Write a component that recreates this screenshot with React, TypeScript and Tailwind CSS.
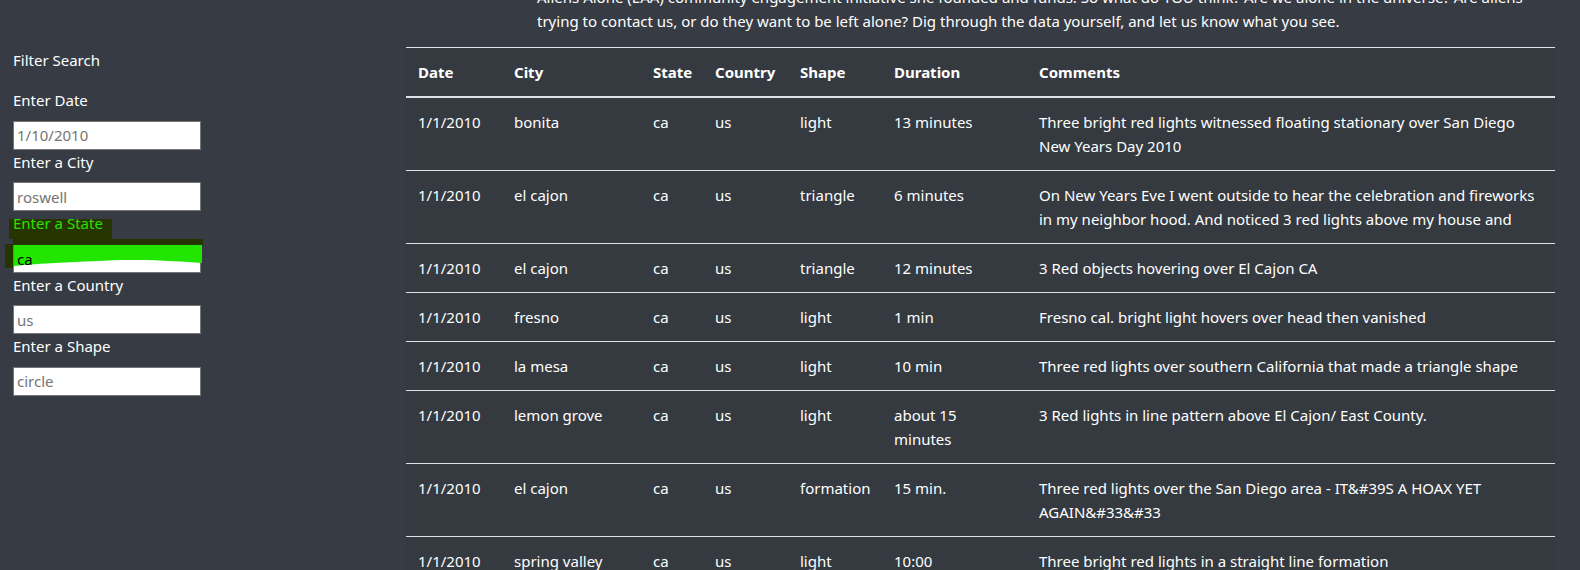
import React from "react";

type Sighting = {
  date: string;
  city: string;
  state: string;
  country: string;
  shape: string;
  duration: string;
  comments: string;
};

const sightings: Sighting[] = [
  { date: "1/1/2010", city: "bonita", state: "ca", country: "us", shape: "light", duration: "13 minutes", comments: "Three bright red lights witnessed floating stationary over San Diego New Years Day 2010" },
  { date: "1/1/2010", city: "el cajon", state: "ca", country: "us", shape: "triangle", duration: "6 minutes", comments: "On New Years Eve I went outside to hear the celebration and fireworks in my neighbor hood. And noticed 3 red lights above my house and" },
  { date: "1/1/2010", city: "el cajon", state: "ca", country: "us", shape: "triangle", duration: "12 minutes", comments: "3 Red objects hovering over El Cajon CA" },
  { date: "1/1/2010", city: "fresno", state: "ca", country: "us", shape: "light", duration: "1 min", comments: "Fresno cal. bright light hovers over head then vanished" },
  { date: "1/1/2010", city: "la mesa", state: "ca", country: "us", shape: "light", duration: "10 min", comments: "Three red lights over southern California that made a triangle shape" },
  { date: "1/1/2010", city: "lemon grove", state: "ca", country: "us", shape: "light", duration: "about 15 minutes", comments: "3 Red lights in line pattern above El Cajon/ East County." },
  { date: "1/1/2010", city: "el cajon", state: "ca", country: "us", shape: "formation", duration: "15 min.", comments: "Three red lights over the San Diego area - IT&#39S A HOAX YET AGAIN&#33&#33" },
  { date: "1/1/2010", city: "spring valley", state: "ca", country: "us", shape: "light", duration: "10:00", comments: "Three bright red lights in a straight line formation" },
];

const font = { fontFamily: '"Noto Sans", "Open Sans", sans-serif' };

function FilterField({ label, placeholder }: { label: string; placeholder: string }) {
  return (
    <div>
      <label className="block h-[24.5px] leading-6 text-[15px] text-white">{label}</label>
      <input
        placeholder={placeholder}
        className="mt-2 block h-[29px] w-[188px] border border-[#767676] bg-white px-[3px] text-[15px] text-black placeholder:text-[#757575] outline-none"
      />
    </div>
  );
}

export default function App() {
  return (
    <div className="h-[570px] w-full overflow-hidden bg-[#373b43] text-white" style={font}>
      <div className="flex w-full">
        {/* Filters */}
        <aside className="w-[406px] shrink-0 pl-[13px] pt-[48px]">
          <h4 className="h-6 text-[15px] leading-6">Filter Search</h4>
          <div className="mt-4">
            <FilterField label="Enter Date" placeholder="1/10/2010" />
            <FilterField label="Enter a City" placeholder="roswell" />

            {/* State field, marked up with a highlighter */}
            <div className="relative">
              <div className="absolute left-[-4px] top-[8px] h-[20px] w-[103px] bg-[#263400]" />
              <label className="relative block h-[24.5px] text-[15px] leading-6 text-[#2ae000]">Enter a State</label>
              <div className="relative mt-2 h-[29px] w-[188px] border border-t-0 border-[#767676] bg-white">
                <svg className="absolute left-0 top-px" width="188" height="22" viewBox="0 0 188 22">
                  <path
                    d="M0 0 H188 V18 C170 17 150 15 120 15 C90 15 70 17 40 18 C20 19 8 20 0 21 Z"
                    fill="#22e600"
                  />
                </svg>
                <div className="absolute left-[-1px] top-[-5px] h-[6px] w-[190px] bg-[#263400]" />
                <input
                  readOnly
                  value="ca"
                  className="relative block h-full w-full bg-transparent px-[3px] pt-[3px] text-[15px] text-black outline-none"
                />
              </div>
              <div className="absolute left-[-8px] top-[33px] h-[24px] w-[8px] bg-[#263400]" />
            </div>

            <FilterField label="Enter a Country" placeholder="us" />
            <FilterField label="Enter a Shape" placeholder="circle" />
          </div>
        </aside>

        {/* Main content */}
        <main className="w-[1149px] shrink-0 overflow-hidden">
          <p className="-mt-[15px] overflow-hidden pl-[131px] text-[15px] leading-6">
            <span className="block whitespace-nowrap">
              Aliens Alone (EAA) community engagement initiative she founded and funds. So what do YOU think? Are we alone in the universe? Are aliens
            </span>
            <span className="block whitespace-nowrap">
              trying to contact us, or do they want to be left alone? Dig through the data yourself, and let us know what you see.
            </span>
          </p>

          <table className="mt-[14px] w-full table-fixed border-collapse bg-[#343a40] text-left text-[15px] leading-6">
            <colgroup>
              <col className="w-[96px]" />
              <col className="w-[139px]" />
              <col className="w-[62px]" />
              <col className="w-[85px]" />
              <col className="w-[94px]" />
              <col className="w-[145px]" />
              <col />
            </colgroup>
            <thead>
              <tr className="border-t border-b-2 border-[#dee2e6]">
                {["Date", "City", "State", "Country", "Shape", "Duration", "Comments"].map((h) => (
                  <th key={h} className="p-3 align-top font-bold">
                    {h}
                  </th>
                ))}
              </tr>
            </thead>
            <tbody>
              {sightings.map((s, i) => (
                <tr key={i} className="border-b border-[#dee2e6]">
                  <td className="p-3 align-top">{s.date}</td>
                  <td className="p-3 align-top">{s.city}</td>
                  <td className="p-3 align-top">{s.state}</td>
                  <td className="p-3 align-top">{s.country}</td>
                  <td className="p-3 align-top">{s.shape}</td>
                  <td className="p-3 align-top">{s.duration}</td>
                  <td className="p-3 align-top">{s.comments}</td>
                </tr>
              ))}
            </tbody>
          </table>
        </main>
      </div>
    </div>
  );
}
